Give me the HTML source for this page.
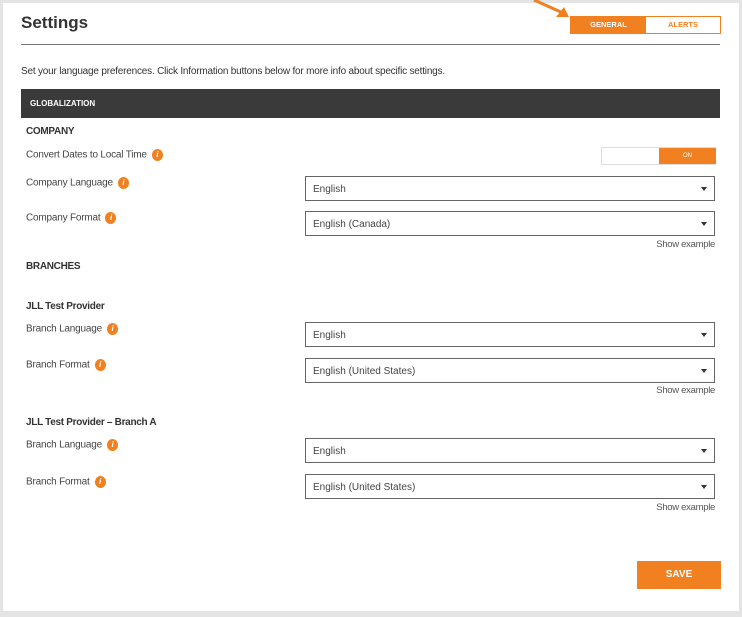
<!DOCTYPE html>
<html><head><style>
*{margin:0;padding:0;box-sizing:border-box}
body{width:742px;height:617px;background:#e4e4e4;font-family:"Liberation Sans",sans-serif;color:#333;position:relative;overflow:hidden}
.panel{position:absolute;left:3px;top:3px;width:736px;height:608px;background:#fff}
.a{position:absolute;white-space:nowrap}
.lbl{font-size:10px;color:#444;letter-spacing:-0.2px}
.h{font-size:10px;font-weight:bold;color:#333;letter-spacing:-0.3px}
.i{display:inline-block;width:11px;height:12px;border-radius:50%;background:#f08020;color:#fff;font-size:8px;font-weight:bold;text-align:center;line-height:12px;font-style:italic;vertical-align:middle;margin-left:5px}
.sel{position:absolute;left:305px;width:410px;height:25px;border:1px solid #666;font-size:10px;color:#444;padding-left:7px;line-height:25px}
.sel:after{content:"";position:absolute;right:7px;top:10px;border-left:3.5px solid transparent;border-right:3.5px solid transparent;border-top:4px solid #333}
.ex{position:absolute;right:27px;font-size:9.5px;color:#555;letter-spacing:-0.3px}
</style></head><body>
<div class="panel"></div>
<svg class="a" style="left:528px;top:0" width="45" height="22"><line x1="6" y1="0" x2="35" y2="13" stroke="#f08020" stroke-width="3"/><polygon points="41,17 28,17 36,7" fill="#f08020"/></svg>
<div class="a" style="left:21px;top:13px;font-size:17px;font-weight:bold;color:#333">Settings</div>
<div class="a" style="left:570px;top:16px;width:151px;height:18px;border:1px solid #f08020;font-size:7.5px;font-weight:bold;">
<div class="a" style="left:0;top:0;width:75px;height:16px;background:#f08020;color:#fff;text-align:center;line-height:16px">GENERAL</div>
<div class="a" style="left:75px;top:0;width:74px;height:16px;color:#f08020;text-align:center;line-height:16px">ALERTS</div></div>
<div class="a" style="left:21px;top:44px;width:699px;height:1px;background:#777"></div>
<div class="a lbl" style="left:21px;top:66px;color:#333">Set your language preferences. Click Information buttons below for more info about specific settings.</div>
<div class="a" style="left:21px;top:89px;width:699px;height:29px;background:#3a3a3a;color:#fff;font-size:8px;font-weight:bold;line-height:29px;padding-left:9px">GLOBALIZATION</div>
<div class="a h" style="left:26px;top:126px">COMPANY</div>
<div class="a lbl" style="left:26px;top:149px">Convert Dates to Local Time<span class="i">i</span></div>
<div class="a" style="left:601px;top:147px;width:115px;height:18px;border:1px solid #ddd"><div class="a" style="left:57px;top:0;width:57px;height:16px;background:#f08020;color:#fff;font-size:6px;text-align:center;line-height:16px">ON</div></div>
<div class="a lbl" style="left:26px;top:177px">Company Language<span class="i">i</span></div>
<div class="sel" style="top:176px">English</div>
<div class="a lbl" style="left:26px;top:212px">Company Format<span class="i">i</span></div>
<div class="sel" style="top:211px">English (Canada)</div>
<div class="ex" style="top:239px">Show example</div>
<div class="a h" style="left:26px;top:261px">BRANCHES</div>
<div class="a h" style="left:26px;top:301px">JLL Test Provider</div>
<div class="a lbl" style="left:26px;top:323px">Branch Language<span class="i">i</span></div>
<div class="sel" style="top:322px">English</div>
<div class="a lbl" style="left:26px;top:359px">Branch Format<span class="i">i</span></div>
<div class="sel" style="top:358px">English (United States)</div>
<div class="ex" style="top:385px">Show example</div>
<div class="a h" style="left:26px;top:417px">JLL Test Provider – Branch A</div>
<div class="a lbl" style="left:26px;top:439px">Branch Language<span class="i">i</span></div>
<div class="sel" style="top:438px">English</div>
<div class="a lbl" style="left:26px;top:476px">Branch Format<span class="i">i</span></div>
<div class="sel" style="top:474px">English (United States)</div>
<div class="ex" style="top:502px">Show example</div>
<div class="a" style="left:637px;top:561px;width:84px;height:28px;background:#f08020;color:#fff;font-size:10px;font-weight:bold;text-align:center;line-height:28px">SAVE</div>
</body></html>
